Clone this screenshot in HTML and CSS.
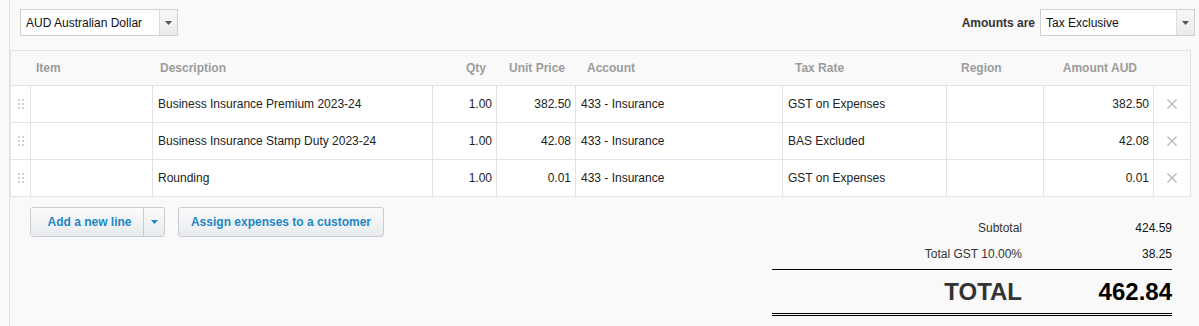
FILE: index.html
```html
<!DOCTYPE html>
<html>
<head>
<meta charset="utf-8">
<link rel="stylesheet" href="styles.css">
</head>
<body>
<div class="page">
  <div class="toolbar">
    <div class="select currency">
      <span class="select-text">AUD Australian Dollar</span>
      <span class="select-arrow"><svg width="7" height="4" viewBox="0 0 7 4"><path d="M0 0H7L3.5 4Z" fill="#555"/></svg></span>
    </div>
    <div class="amounts">
      <span class="amounts-label">Amounts are</span>
      <div class="select tax-select">
        <span class="select-text">Tax Exclusive</span>
        <span class="select-arrow"><svg width="7" height="4" viewBox="0 0 7 4"><path d="M0 0H7L3.5 4Z" fill="#555"/></svg></span>
      </div>
    </div>
  </div>

  <div class="grid">
    <div class="row head">
      <div class="hc"></div>
      <div class="hc h-item">Item</div>
      <div class="hc h-desc">Description</div>
      <div class="hc h-qty">Qty</div>
      <div class="hc h-unit">Unit Price</div>
      <div class="hc h-acct">Account</div>
      <div class="hc h-tax">Tax Rate</div>
      <div class="hc h-region">Region</div>
      <div class="hc h-amt">Amount AUD</div>
      <div class="hc"></div>
    </div>

    <div class="row line">
      <div class="handle"><svg width="6" height="10" viewBox="0 0 6 10"><g fill="#cfcfcf"><rect x="0" y="0" width="2" height="2"/><rect x="4" y="0" width="2" height="2"/><rect x="0" y="4" width="2" height="2"/><rect x="4" y="4" width="2" height="2"/><rect x="0" y="8" width="2" height="2"/><rect x="4" y="8" width="2" height="2"/></g></svg></div>
      <div class="c"></div>
      <div class="c">Business Insurance Premium 2023-24</div>
      <div class="c num">1.00</div>
      <div class="c num">382.50</div>
      <div class="c">433 - Insurance</div>
      <div class="c">GST on Expenses</div>
      <div class="c"></div>
      <div class="c num">382.50</div>
      <div class="c del"><svg width="10" height="10" viewBox="0 0 10 10"><path d="M0.5 0.5L9.5 9.5M9.5 0.5L0.5 9.5" stroke="#b5b5b5" stroke-width="1.2"/></svg></div>
    </div>

    <div class="row line">
      <div class="handle"><svg width="6" height="10" viewBox="0 0 6 10"><g fill="#cfcfcf"><rect x="0" y="0" width="2" height="2"/><rect x="4" y="0" width="2" height="2"/><rect x="0" y="4" width="2" height="2"/><rect x="4" y="4" width="2" height="2"/><rect x="0" y="8" width="2" height="2"/><rect x="4" y="8" width="2" height="2"/></g></svg></div>
      <div class="c"></div>
      <div class="c">Business Insurance Stamp Duty 2023-24</div>
      <div class="c num">1.00</div>
      <div class="c num">42.08</div>
      <div class="c">433 - Insurance</div>
      <div class="c">BAS Excluded</div>
      <div class="c"></div>
      <div class="c num">42.08</div>
      <div class="c del"><svg width="10" height="10" viewBox="0 0 10 10"><path d="M0.5 0.5L9.5 9.5M9.5 0.5L0.5 9.5" stroke="#b5b5b5" stroke-width="1.2"/></svg></div>
    </div>

    <div class="row line">
      <div class="handle"><svg width="6" height="10" viewBox="0 0 6 10"><g fill="#cfcfcf"><rect x="0" y="0" width="2" height="2"/><rect x="4" y="0" width="2" height="2"/><rect x="0" y="4" width="2" height="2"/><rect x="4" y="4" width="2" height="2"/><rect x="0" y="8" width="2" height="2"/><rect x="4" y="8" width="2" height="2"/></g></svg></div>
      <div class="c"></div>
      <div class="c">Rounding</div>
      <div class="c num">1.00</div>
      <div class="c num">0.01</div>
      <div class="c">433 - Insurance</div>
      <div class="c">GST on Expenses</div>
      <div class="c"></div>
      <div class="c num">0.01</div>
      <div class="c del"><svg width="10" height="10" viewBox="0 0 10 10"><path d="M0.5 0.5L9.5 9.5M9.5 0.5L0.5 9.5" stroke="#b5b5b5" stroke-width="1.2"/></svg></div>
    </div>
  </div>

  <div class="footer">
    <div class="actions">
      <div class="btn-group">
        <button class="btn btn-main">Add a new line</button>
        <button class="btn btn-drop"><svg width="7" height="4" viewBox="0 0 7 4"><path d="M0 0H7L3.5 4Z" fill="#1e87c4"/></svg></button>
      </div>
      <button class="btn btn-single">Assign expenses to a customer</button>
    </div>
    <div class="totals">
      <div class="sum-row"><span class="sum-label">Subtotal</span><span class="sum-value">424.59</span></div>
      <div class="sum-row gst"><span class="sum-label">Total GST 10.00%</span><span class="sum-value">38.25</span></div>
      <div class="sum-row grand"><span class="sum-label">TOTAL</span><span class="sum-value">462.84</span></div>
    </div>
  </div>
</div>
</body>
</html>
```

FILE: styles.css
```css
html, body {
  margin: 0;
  padding: 0;
  background: #f9f9f9;
}
body {
  font-family: "Liberation Sans", Arial, sans-serif;
  font-size: 12px;
  color: #333;
}
.page {
  margin-left: 9px;
  border-left: 1px solid #e3e3e3;
  min-height: 326px;
  box-sizing: border-box;
}

/* toolbar */
.toolbar {
  display: flex;
  justify-content: space-between;
  align-items: center;
  padding: 9px 4px 0 10px;
  margin-bottom: 14px;
}
.select {
  display: flex;
  height: 27px;
  box-sizing: border-box;
  border: 1px solid #cfcfcf;
  background: #fff;
}
.currency { width: 158px; }
.tax-select { width: 155px; }
.select-text {
  flex: 1;
  display: flex;
  align-items: center;
  padding-left: 5px;
  color: #111;
}
.select-arrow {
  width: 17px;
  border-left: 1px solid #dcdcdc;
  background: linear-gradient(#f7f7f7, #ebebeb);
  display: flex;
  align-items: center;
  justify-content: center;
}
.amounts {
  display: flex;
  align-items: center;
}
.amounts-label {
  font-weight: bold;
  color: #333;
  margin-right: 5px;
}

/* grid */
.grid {
  width: 1181px;
  box-sizing: border-box;
  border: 1px solid #e3e3e3;
}
.row {
  display: grid;
  grid-template-columns: 19px 122px 280px 64px 79px 207px 164px 97px 110px 37px;
}
.head {
  height: 34px;
  align-items: center;
}
.hc {
  font-weight: bold;
  color: #9c9c9c;
  white-space: nowrap;
}
.h-item { padding-left: 6px; }
.h-desc { padding-left: 8px; }
.h-qty { text-align: right; padding-right: 10px; }
.h-unit { text-align: right; padding-right: 10px; }
.h-acct { padding-left: 12px; }
.h-tax { padding-left: 13px; }
.h-region { padding-left: 15px; }
.h-amt { text-align: right; padding-right: 16px; }

.line {
  height: 37px;
  box-sizing: border-box;
  border-top: 1px solid #e3e3e3;
  background: #fff;
}
.handle {
  display: flex;
  align-items: center;
  justify-content: center;
}
.c {
  border-left: 1px solid #e3e3e3;
  padding: 0 5px 1px;
  display: flex;
  align-items: center;
  white-space: nowrap;
  color: #222;
}
.c.num {
  justify-content: flex-end;
  padding-right: 4px;
}
.c.del {
  justify-content: center;
  padding: 0;
}

/* footer */
.footer {
  display: flex;
  justify-content: space-between;
  align-items: flex-start;
  padding: 10px 27px 0 20px;
}
.actions {
  display: flex;
  gap: 13px;
}
.btn {
  font-family: "Liberation Sans", Arial, sans-serif;
  font-size: 12px;
  font-weight: bold;
  color: #1e87c4;
  background: linear-gradient(#fbfbfb, #e8ebee);
  height: 30px;
  box-sizing: border-box;
  margin: 0;
  cursor: pointer;
}
.btn-group {
  display: flex;
  border: 1px solid #c9ccd0;
  border-radius: 3px;
  overflow: hidden;
  height: 30px;
  box-sizing: border-box;
}
.btn-group .btn {
  border: none;
  height: 28px;
}
.btn-main {
  width: 112px;
  padding: 0 0 0 5px;
}
.btn-drop {
  width: 21px;
  border-left: 1px solid #c9ccd0 !important;
  padding: 0;
  display: flex;
  align-items: center;
  justify-content: center;
}
.btn-single {
  width: 206px;
  border: 1px solid #c9ccd0;
  border-radius: 3px;
  padding: 0;
}

/* totals */
.totals {
  width: 400px;
  margin-top: 8px;
}
.sum-row {
  display: flex;
  align-items: center;
  height: 26px;
}
.sum-label {
  width: 250px;
  text-align: right;
  color: #333;
}
.sum-value {
  width: 150px;
  text-align: right;
  color: #111;
}
.gst {
  margin-bottom: 2px;
}
.grand {
  height: 43px;
  border-top: 1px solid #000;
  border-bottom: 3px double #000;
  font-size: 24px;
  font-weight: bold;
}
.grand .sum-label { color: #333; }
.grand .sum-value { color: #000; }
```
